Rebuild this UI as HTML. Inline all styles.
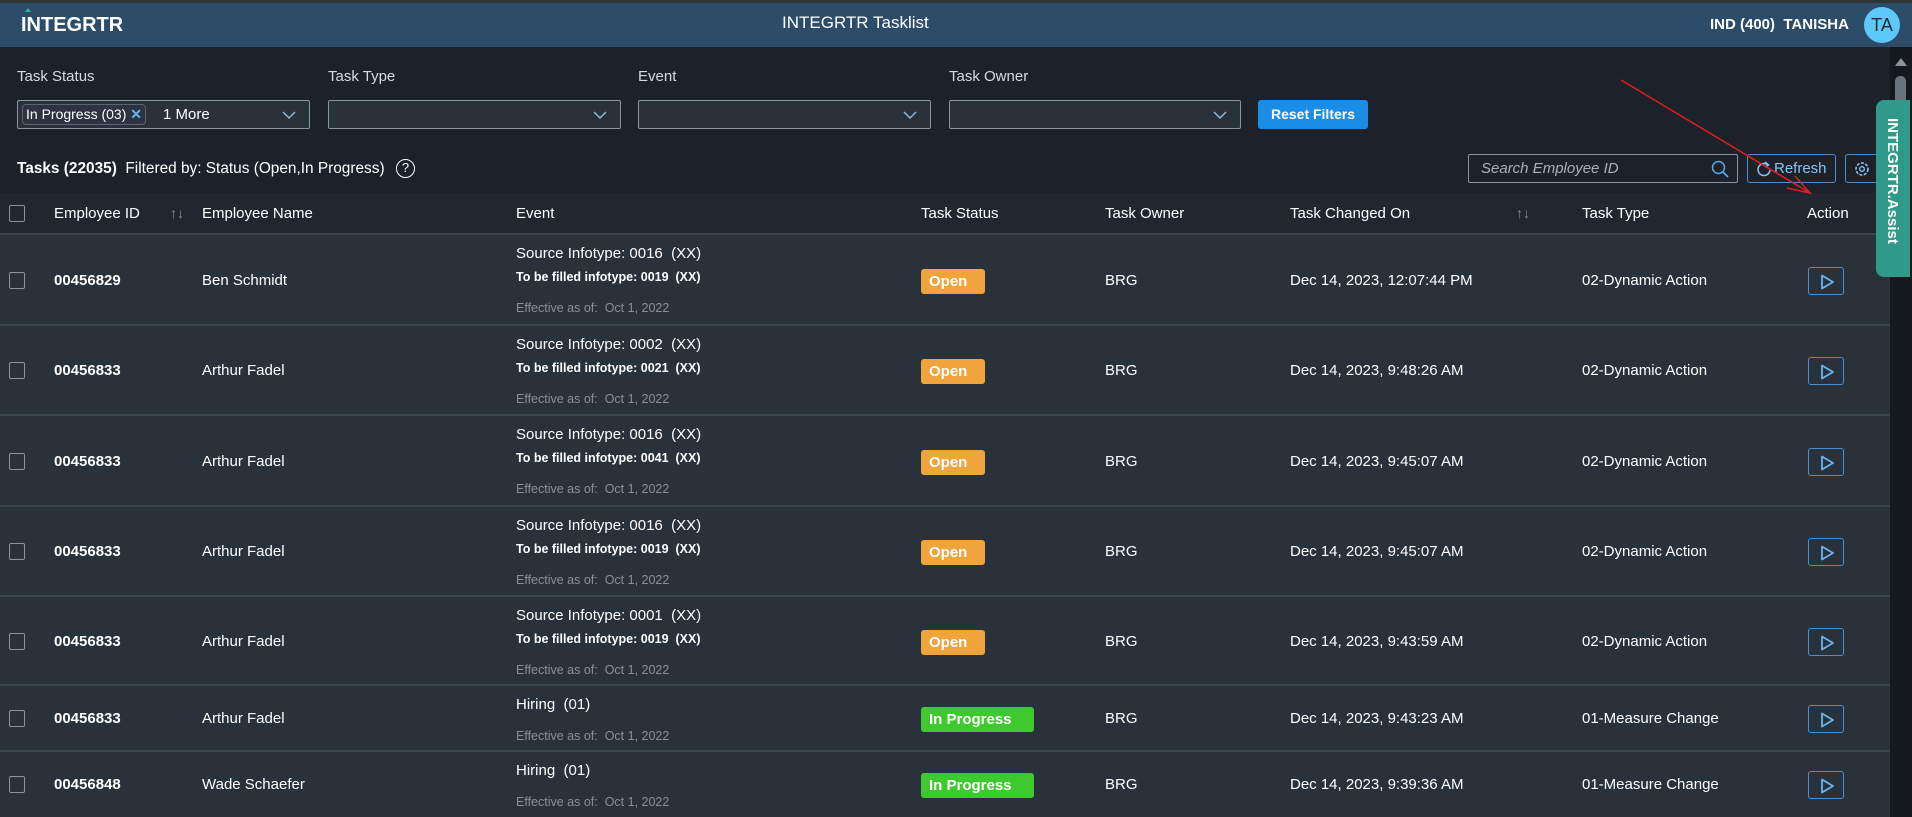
<!DOCTYPE html>
<html><head><meta charset="utf-8"><style>
*{margin:0;padding:0;box-sizing:border-box}
body{width:1912px;height:817px;overflow:hidden;background:#1d2129;font-family:"Liberation Sans",sans-serif;color:#fff;position:relative}
.a{position:absolute;white-space:nowrap}
.top{left:0;top:0;width:1912px;height:47px;background:#2d4c6a;border-top:3px solid #333}
.lbl{font-size:15px;color:#d6dbe1;top:68px}
.inp{top:100px;height:29px;border:1px solid #8b949e;background:#29313b;border-radius:2px}
.chev{position:absolute;right:12px;top:6px}
.th{font-size:15px;top:205px;color:#fff}
.row{left:0;width:1890px;background:#29313b;border-bottom:2px solid #3a4350}
.cb{left:9px;width:16px;height:17px;border:1px solid #8b949e;border-radius:2px}
.c{font-size:15px}
.b{font-weight:bold}
.badge{left:921px;height:25px;border-radius:3px;font-size:15px;font-weight:bold;padding:4px 8px 0;color:#fff}
.ev1{font-size:15px}
.ev2{font-size:12.5px;font-weight:bold}
.ev3{font-size:12.5px;color:#8a9099}
.act{left:1808px;width:36px;height:28px;border:1px solid #4a90d0;border-radius:3px}
</style></head><body>
<div class="a top"></div>
<div class="a" style="left:25px;top:8px;width:0;height:0;border-left:3px solid transparent;border-right:3px solid transparent;border-bottom:4px solid #35b39a"></div>
<div class="a b" style="left:21px;top:14px;font-size:20px;color:#fff">INTEGRTR</div>
<div class="a" style="left:782px;top:13px;font-size:17px">INTEGRTR Tasklist</div>
<div class="a b" style="left:1710px;top:16px;font-size:15px">IND (400)&nbsp; TANISHA</div>
<div class="a" style="left:1864px;top:7px;width:36px;height:36px;border-radius:50%;background:#5ec9f8;color:#1d2a3a;font-size:18px;text-align:center;line-height:36px">TA</div>

<div class="a lbl" style="left:17px">Task Status</div>
<div class="a lbl" style="left:328px">Task Type</div>
<div class="a lbl" style="left:638px">Event</div>
<div class="a lbl" style="left:949px">Task Owner</div>
<div class="a inp" style="left:17px;width:293px">
 <div class="a" style="left:4px;top:3px;height:21px;border:1px solid #5a6470;border-radius:4px;background:#2b3440;padding:1px 3px;font-size:14px">In Progress (03) <span style="color:#6ab4f0;font-weight:bold">✕</span></div>
 <div class="a" style="left:145px;top:5px;font-size:15px">1 More</div>
 <svg class="chev" width="16" height="16"><path d="M2 5l6 6 6-6" stroke="#8fb8dc" stroke-width="1.5" fill="none"/></svg></div>
<div class="a inp" style="left:328px;width:293px"><svg class="chev" width="16" height="16"><path d="M2 5l6 6 6-6" stroke="#8fb8dc" stroke-width="1.5" fill="none"/></svg></div>
<div class="a inp" style="left:638px;width:293px"><svg class="chev" width="16" height="16"><path d="M2 5l6 6 6-6" stroke="#8fb8dc" stroke-width="1.5" fill="none"/></svg></div>
<div class="a inp" style="left:949px;width:292px"><svg class="chev" width="16" height="16"><path d="M2 5l6 6 6-6" stroke="#8fb8dc" stroke-width="1.5" fill="none"/></svg></div>
<div class="a b" style="left:1258px;top:100px;width:110px;height:29px;background:#1b8de6;border-radius:3px;font-size:14px;text-align:center;line-height:29px">Reset Filters</div>

<div class="a" style="left:17px;top:160px;font-size:15.4px"><b>Tasks (22035)</b>&nbsp; Filtered by: Status (Open,In Progress)</div>
<div class="a" style="left:396px;top:159px;width:19px;height:19px;border:1.5px solid #fff;border-radius:50%;font-size:13px;text-align:center;line-height:16px">?</div>

<div class="a" style="left:1468px;top:154px;width:270px;height:29px;border:1px solid #8b949e;border-radius:2px;background:#1d2129"><span class="a" style="left:12px;top:5px;font-size:15px;font-style:italic;color:#aab0b8">Search Employee ID</span>
<svg class="a" style="right:8px;top:5px" width="18" height="18"><circle cx="7.5" cy="7.5" r="6" stroke="#5aa8e8" stroke-width="1.5" fill="none"/><path d="M12 12l5 5" stroke="#5aa8e8" stroke-width="1.8"/></svg></div>
<div class="a" style="left:1747px;top:154px;width:89px;height:29px;border:1px solid #4a90d0;border-radius:3px;font-size:15px;color:#8cc4f4;padding:5px 0 0 26px">Refresh
<svg class="a" style="left:8px;top:6px" width="16" height="17"><path d="M12 4A6 6 0 1 0 14 9" stroke="#8cc4f4" stroke-width="1.5" fill="none"/><path d="M9 1l3.5 3L9 6" stroke="#8cc4f4" stroke-width="1.5" fill="none"/></svg></div>
<div class="a" style="left:1845px;top:154px;width:40px;height:29px;border:1px solid #4a90d0;border-radius:3px"><svg class="a" style="left:7px;top:5px" width="18" height="18"><circle cx="9" cy="9" r="6" stroke="#8cc4f4" stroke-width="1.6" fill="none" stroke-dasharray="3 1.5"/><circle cx="9" cy="9" r="2.3" stroke="#8cc4f4" stroke-width="1.3" fill="none"/></svg></div>

<div class="a" style="left:0;top:193px;width:1890px;height:42px;background:#22272f;border-bottom:2px solid #3a4350"></div>
<div class="a cb" style="top:205px"></div>
<div class="a th" style="left:54px">Employee ID</div>
<div class="a" style="left:170px;top:205px;font-size:14px;color:#8a9099">↑↓</div>
<div class="a th" style="left:202px">Employee Name</div>
<div class="a th" style="left:516px">Event</div>
<div class="a th" style="left:921px">Task Status</div>
<div class="a th" style="left:1105px">Task Owner</div>
<div class="a th" style="left:1290px">Task Changed On</div>
<div class="a" style="left:1516px;top:205px;font-size:14px;color:#8a9099">↑↓</div>
<div class="a th" style="left:1582px">Task Type</div>
<div class="a th" style="left:1807px">Action</div>

<div class="a row" style="top:235px;height:91px"></div>
<div class="a row" style="top:326px;height:90px"></div>
<div class="a row" style="top:416px;height:91px"></div>
<div class="a row" style="top:507px;height:90px"></div>
<div class="a row" style="top:597px;height:89px"></div>
<div class="a row" style="top:686px;height:66px"></div>
<div class="a row" style="top:752px;height:65px;border:none"></div>

<div id="r"></div>
<script>
var rows=[
[235,91,'00456829','Ben Schmidt','0016','0019','Dec 14, 2023, 12:07:44 PM','02-Dynamic Action',0],
[326,90,'00456833','Arthur Fadel','0002','0021','Dec 14, 2023, 9:48:26 AM','02-Dynamic Action',0],
[416,91,'00456833','Arthur Fadel','0016','0041','Dec 14, 2023, 9:45:07 AM','02-Dynamic Action',0],
[507,90,'00456833','Arthur Fadel','0016','0019','Dec 14, 2023, 9:45:07 AM','02-Dynamic Action',0],
[597,89,'00456833','Arthur Fadel','0001','0019','Dec 14, 2023, 9:43:59 AM','02-Dynamic Action',0],
[686,66,'00456833','Arthur Fadel','','','Dec 14, 2023, 9:43:23 AM','01-Measure Change',1],
[752,65,'00456848','Wade Schaefer','','','Dec 14, 2023, 9:39:36 AM','01-Measure Change',1]];
var h='';
rows.forEach(function(r){var t=r[0],m=t+r[1]/2;
h+='<div class="a cb" style="top:'+(m-9)+'px"></div>';
h+='<div class="a c b" style="left:54px;top:'+(m-9)+'px">'+r[2]+'</div>';
h+='<div class="a c" style="left:202px;top:'+(m-9)+'px">'+r[3]+'</div>';
if(!r[8]){
h+='<div class="a ev1" style="left:516px;top:'+(t+10)+'px">Source Infotype: '+r[4]+'&nbsp; (XX)</div>';
h+='<div class="a ev2" style="left:516px;top:'+(t+35)+'px">To be filled infotype: '+r[5]+'&nbsp; (XX)</div>';
h+='<div class="a ev3" style="left:516px;top:'+(t+66)+'px">Effective as of:&nbsp; Oct 1, 2022</div>';
h+='<div class="a badge" style="top:'+(m-12)+'px;width:64px;background:#f0a43c">Open</div>';
}else{
h+='<div class="a ev1" style="left:516px;top:'+(t+10)+'px">Hiring&nbsp; (01)</div>';
h+='<div class="a ev3" style="left:516px;top:'+(t+43)+'px">Effective as of:&nbsp; Oct 1, 2022</div>';
h+='<div class="a badge" style="top:'+(m-12)+'px;width:113px;background:#3ec92e">In Progress</div>';}
h+='<div class="a c" style="left:1105px;top:'+(m-9)+'px">BRG</div>';
h+='<div class="a c" style="left:1290px;top:'+(m-9)+'px">'+r[6]+'</div>';
h+='<div class="a c" style="left:1582px;top:'+(m-9)+'px">'+r[7]+'</div>';
h+='<div class="a act" style="top:'+(m-14)+'px"><svg style="position:absolute;left:10px;top:6px" width="16" height="16"><path d="M3 1.5L14 8 3 14.5Z" stroke="#6ab4f0" stroke-width="1.8" fill="none" stroke-linejoin="round"/></svg></div>';
});
document.getElementById('r').innerHTML=h;
</script>

<div class="a" style="left:1890px;top:47px;width:22px;height:770px;background:#15181d"></div>
<div class="a" style="left:1895px;top:58px;width:0;height:0;border-left:6px solid transparent;border-right:6px solid transparent;border-bottom:8px solid #8b949e"></div>
<div class="a" style="left:1895px;top:76px;width:11px;height:30px;border-radius:5px;background:#6b737d"></div>
<div class="a" style="left:1876px;top:100px;width:34px;height:177px;background:#2f9a8a;border-radius:8px 0 0 8px"></div>
<div class="a b" style="left:1884px;top:118px;font-size:15px;writing-mode:vertical-rl;color:#fff">INTEGRTR.Assist</div>
<svg class="a" style="left:0;top:0" width="1912" height="817"><path d="M1621 80L1810 193" stroke="#e02020" stroke-width="1.5"/><path d="M1787 188L1810 193 1795 176" stroke="#e02020" stroke-width="1.5" fill="none"/></svg>
</body></html>
